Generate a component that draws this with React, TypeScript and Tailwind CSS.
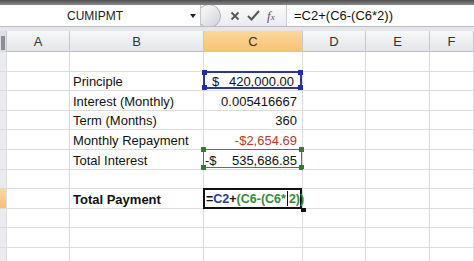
import React from "react";

const cols = ["A", "B", "C", "D", "E", "F"];
const grid = "grid grid-cols-[7px_63px_134px_99px_63px_64px_1fr]";
const cell = "border-r border-b border-[#dadcdd] h-[19.6px] relative";

type Row = { b?: React.ReactNode; c?: React.ReactNode; hl?: boolean; sel?: "blue" | "green" | "edit" };

const rows: Row[] = [
  {},
  {
    b: "Principle",
    c: (
      <div className="flex justify-between px-[8px]">
        <span>$</span>
        <span>420,000.00</span>
      </div>
    ),
    sel: "blue",
  },
  { b: "Interest (Monthly)", c: <div className="text-right pr-[5px]">0.005416667</div> },
  { b: "Term (Months)", c: <div className="text-right pr-[5px]">360</div> },
  { b: "Monthly Repayment", c: <div className="text-right pr-[5px] text-[#c0392b]">-$2,654.69</div> },
  {
    b: "Total Interest",
    c: (
      <div className="flex justify-between pl-[1px] pr-[5px]">
        <span>-$</span>
        <span>535,686.85</span>
      </div>
    ),
    sel: "green",
  },
  {},
  { b: <span className="font-bold">Total Payment</span>, hl: true, sel: "edit" },
  {},
  {},
  {},
];

function Handles({ color }: { color: string }) {
  const s = `absolute w-[5px] h-[5px] ${color}`;
  return (
    <>
      <span className={`${s} -left-[3px] -top-[3px]`} />
      <span className={`${s} -right-[3px] -top-[3px]`} />
      <span className={`${s} -left-[3px] -bottom-[3px]`} />
      <span className={`${s} -right-[3px] -bottom-[3px]`} />
    </>
  );
}

export default function App() {
  return (
    <div className="w-[474px] h-[261px] overflow-hidden bg-white text-[13px] text-[#111] font-['Liberation_Sans',Arial,sans-serif]">
      {/* top strip */}
      <div className="h-[5px] bg-gradient-to-b from-[#4e4e4e] to-[#8a8a8a]" />
      {/* formula bar */}
      <div className="flex h-[22px] bg-white border-b border-[#b9bcc1]">
        <div className="w-[201px] flex items-center border-r border-[#c5c8cc] relative">
          <span className="flex-1 text-center text-[12px] text-[#222] pr-[10px]">CUMIPMT</span>
          <span className="absolute right-[4px] top-[9px] w-0 h-0 border-l-[3px] border-r-[3px] border-t-[4px] border-l-transparent border-r-transparent border-t-[#222]" />
        </div>
        <div className="w-[86px] flex items-center bg-gradient-to-b from-[#fbfbfb] to-[#e9ebee] border-r border-[#c5c8cc] relative overflow-hidden">
          <span className="-ml-[4px] w-[24px] h-[24px] shrink-0 rounded-full border border-[#b0b3b8] bg-gradient-to-br from-[#ffffff] to-[#cfd2d6]" />
          <svg width="10" height="10" viewBox="0 0 10 10" className="ml-[9px] shrink-0">
            <path d="M1.5 1.5 L8.5 8.5 M8.5 1.5 L1.5 8.5" stroke="#555" strokeWidth="1.8" />
          </svg>
          <svg width="13" height="11" viewBox="0 0 13 11" className="ml-[7px] shrink-0">
            <path d="M1 6 L4.5 9.5 L12 1" stroke="#555" strokeWidth="2" fill="none" />
          </svg>
          <span className="ml-[7px] italic text-[13px] text-[#555] font-['Liberation_Serif',serif]">
            f<span className="text-[9px]">x</span>
          </span>
        </div>
        <div className="flex items-center pl-[7px] pt-[1px] text-[13px]">=C2+(C6-(C6*2))</div>
      </div>
      <div className="h-[4px] bg-[#e4e6e9]" />
      {/* column headers */}
      <div className={`${grid} h-[21px] bg-gradient-to-b from-[#f7f8f9] to-[#e3e5e8] border-b border-[#b9bcc1] text-[#333] text-[13px]`}>
        <div className="border-r border-[#c5c8cc] bg-[#dcdfe3] flex items-end">
          <span className="ml-[1px] mb-[2px] w-[4px] h-[14px] bg-[#8a8d92]" />
        </div>
        {cols.map((c) => (
          <div
            key={c}
            className={`border-r border-[#c5c8cc] flex items-center justify-center pt-[1px] ${
              c === "C" ? "bg-gradient-to-b from-[#fbd89b] to-[#f5c26e]" : ""
            }`}
          >
            {c}
          </div>
        ))}
      </div>
      {/* rows */}
      {rows.map((r, i) => (
        <div key={i} className={grid}>
          <div
            className={`${cell} border-[#c5c8cc] ${
              r.hl ? "bg-gradient-to-b from-[#fbd89b] to-[#f5c26e]" : "bg-[#e9ebee]"
            }`}
          />
          <div className={cell} />
          <div className={`${cell} flex items-center pl-[3px] pt-[2px]`}>{r.b}</div>
          <div className={`${cell} flex items-center pt-[2px]`}>
            <div className="w-full">{r.c}</div>
            {r.sel === "blue" && (
              <div className="absolute -left-[1px] -top-[1px] right-0 bottom-[1px] border-2 border-[#2b3a8f]">
                <Handles color="bg-[#1f2fa8]" />
              </div>
            )}
            {r.sel === "green" && (
              <div className="absolute -left-[1px] -top-[1px] right-0 bottom-[1px] border border-[#3c8a3c]">
                <Handles color="bg-[#2e7d32]" />
              </div>
            )}
            {r.sel === "edit" && (
              <>
                <div className="absolute -left-[1px] -top-[1px] right-0 -bottom-[1px] border-2 border-[#111] z-10" />
                <div className="absolute left-[2px] top-[1px] bottom-0 flex items-center whitespace-nowrap font-bold text-[12.5px] z-20">
                  <span>=</span>
                  <span className="text-[#2b3a9a]">C2</span>
                  <span>+</span>
                  <span className="text-[#3a8a3a]">(C6-(C6*</span>
                  <span className="inline-block w-px h-[15px] bg-[#111] mx-[1px]" />
                  <span className="text-[#3a8a3a]">2))</span>
                </div>
                <span className="absolute -right-[4px] -bottom-[4px] w-[5px] h-[4px] bg-[#111] z-20" />
              </>
            )}
          </div>
          <div className={cell} />
          <div className={cell} />
          <div className={cell} />
        </div>
      ))}
    </div>
  );
}
